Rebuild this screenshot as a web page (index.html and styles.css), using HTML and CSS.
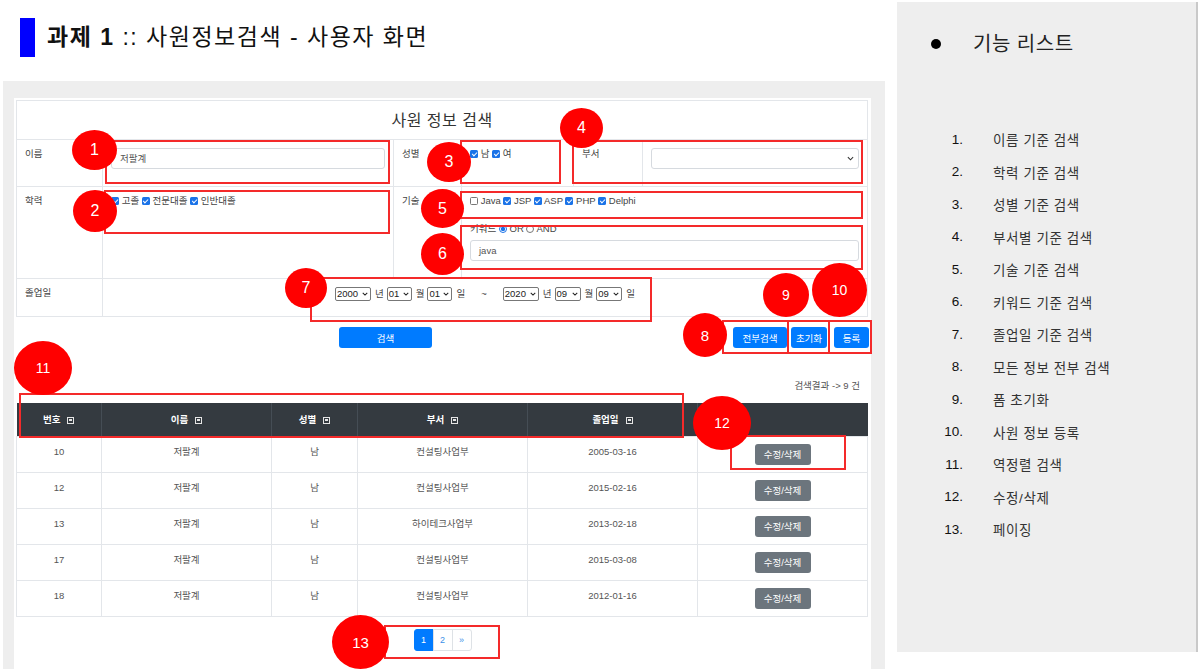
FILE: index.html
```html
<!DOCTYPE html>
<html lang="ko">
<head>
<meta charset="utf-8">
<title>과제 1 :: 사원정보검색 - 사용자 화면</title>
<link rel="stylesheet" href="styles.css">
</head>
<body>
<div class="page">
  <div class="main">
    <header class="title">
      <span class="bar"></span>
      <h1><b>과제 1</b> :: 사원정보검색 - 사용자 화면</h1>
    </header>
    <div class="panel">
      <div class="sheet">
        <table class="form">
          <colgroup>
            <col class="w86"><col class="w291"><col class="w68"><col class="w112"><col class="w69"><col class="w225">
          </colgroup>
          <tr class="r-title"><td colspan="6" class="form-title">사원 정보 검색</td></tr>
          <tr class="r1">
            <td>이름</td>
            <td><div class="input">저팔계</div></td>
            <td>성별</td>
            <td><span class="cb"></span> 남 <span class="cb"></span> 여</td>
            <td>부서</td>
            <td><div class="select"><svg class="chev" viewBox="0 0 8 5" width="7" height="5"><path d="M1 1l3 3 3-3" fill="none" stroke="#333" stroke-width="1.2"/></svg></div></td>
          </tr>
          <tr class="r2">
            <td>학력</td>
            <td><span class="cb"></span> 고졸 <span class="cb"></span> 전문대졸 <span class="cb"></span> 인반대졸</td>
            <td>기술</td>
            <td colspan="3">
              <div class="line"><span class="cb off"></span> Java <span class="cb"></span> JSP <span class="cb"></span> ASP <span class="cb"></span> PHP <span class="cb"></span> Delphi</div>
              <div class="kw">키워드 <span class="rd"></span> OR <span class="rd off"></span> AND</div>
              <div class="input">java</div>
            </td>
          </tr>
          <tr class="r3">
            <td>졸업일</td>
            <td colspan="5">
              <div class="dates"><span class="dsel w36">2000<svg class="chev" viewBox="0 0 8 5" width="6" height="4"><path d="M1 1l3 3 3-3" fill="none" stroke="#222" stroke-width="1.4"/></svg></span><span class="unit">년</span><span class="dsel w25">01<svg class="chev" viewBox="0 0 8 5" width="6" height="4"><path d="M1 1l3 3 3-3" fill="none" stroke="#222" stroke-width="1.4"/></svg></span><span class="unit">월</span><span class="dsel w25">01<svg class="chev" viewBox="0 0 8 5" width="6" height="4"><path d="M1 1l3 3 3-3" fill="none" stroke="#222" stroke-width="1.4"/></svg></span><span class="unit end">일</span><span class="tilde">~</span><span class="dsel w36">2020<svg class="chev" viewBox="0 0 8 5" width="6" height="4"><path d="M1 1l3 3 3-3" fill="none" stroke="#222" stroke-width="1.4"/></svg></span><span class="unit">년</span><span class="dsel w26">09<svg class="chev" viewBox="0 0 8 5" width="6" height="4"><path d="M1 1l3 3 3-3" fill="none" stroke="#222" stroke-width="1.4"/></svg></span><span class="unit">월</span><span class="dsel w26">09<svg class="chev" viewBox="0 0 8 5" width="6" height="4"><path d="M1 1l3 3 3-3" fill="none" stroke="#222" stroke-width="1.4"/></svg></span><span class="unit end">일</span></div>
            </td>
          </tr>
        </table>

        <div class="actions">
          <span class="btn btn-search">검색</span>
          <span class="btn btn-all">전부검색</span>
          <span class="btn btn-reset">초기화</span>
          <span class="btn btn-reg">등록</span>
        </div>

        <div class="count">검색결과 -&gt; 9 건</div>

        <table class="list">
          <colgroup>
            <col class="c85"><col class="c170"><col class="c86"><col class="c170"><col class="c170"><col class="c170">
          </colgroup>
          <thead>
            <tr>
              <th>번호<span class="sort"></span></th>
              <th>이름<span class="sort"></span></th>
              <th>성별<span class="sort"></span></th>
              <th>부서<span class="sort"></span></th>
              <th>졸업일<span class="sort"></span></th>
              <th></th>
            </tr>
          </thead>
          <tbody>
            <tr><td>10</td><td>저팔계</td><td>남</td><td>컨설팅사업부</td><td>2005-03-16</td><td><span class="btn-edit">수정/삭제</span></td></tr>
            <tr><td>12</td><td>저팔계</td><td>남</td><td>컨설팅사업부</td><td>2015-02-16</td><td><span class="btn-edit">수정/삭제</span></td></tr>
            <tr><td>13</td><td>저팔계</td><td>남</td><td>하이테크사업부</td><td>2013-02-18</td><td><span class="btn-edit">수정/삭제</span></td></tr>
            <tr><td>17</td><td>저팔계</td><td>남</td><td>컨설팅사업부</td><td>2015-03-08</td><td><span class="btn-edit">수정/삭제</span></td></tr>
            <tr><td>18</td><td>저팔계</td><td>남</td><td>컨설팅사업부</td><td>2012-01-16</td><td><span class="btn-edit">수정/삭제</span></td></tr>
          </tbody>
        </table>

        <nav class="pager">
          <span class="pg active">1</span><span class="pg">2</span><span class="pg last">»</span>
        </nav>
      </div>
    </div>
  </div>

  <aside class="side">
    <h2><span class="bullet"></span>기능 리스트</h2>
    <ol class="items">
      <li><span class="num">1.</span><span class="txt">이름 기준 검색</span></li>
      <li><span class="num">2.</span><span class="txt">학력 기준 검색</span></li>
      <li><span class="num">3.</span><span class="txt">성별 기준 검색</span></li>
      <li><span class="num">4.</span><span class="txt">부서별 기준 검색</span></li>
      <li><span class="num">5.</span><span class="txt">기술 기준 검색</span></li>
      <li><span class="num">6.</span><span class="txt">키워드 기준 검색</span></li>
      <li><span class="num">7.</span><span class="txt">졸업일 기준 검색</span></li>
      <li><span class="num">8.</span><span class="txt">모든 정보 전부 검색</span></li>
      <li><span class="num">9.</span><span class="txt">폼 초기화</span></li>
      <li><span class="num">10.</span><span class="txt">사원 정보 등록</span></li>
      <li><span class="num">11.</span><span class="txt">역정렬 검색</span></li>
      <li><span class="num">12.</span><span class="txt">수정/삭제</span></li>
      <li><span class="num">13.</span><span class="txt">페이징</span></li>
    </ol>
  </aside>

  <div class="notes">
    <div class="box b1"></div><div class="box b2"></div><div class="box b3"></div><div class="box b4"></div>
    <div class="box b5"></div><div class="box b6"></div><div class="box b7"></div><div class="box b8"></div>
    <div class="box b9"></div><div class="box b10"></div><div class="box b11"></div><div class="box b12"></div>
    <div class="box b13"></div>
    <div class="dot d1">1</div><div class="dot d2">2</div><div class="dot d3">3</div><div class="dot d4">4</div>
    <div class="dot d5">5</div><div class="dot d6">6</div><div class="dot d7">7</div><div class="dot d8">8</div>
    <div class="dot d9">9</div><div class="dot d10">10</div><div class="dot d11">11</div><div class="dot d12">12</div>
    <div class="dot d13">13</div>
  </div>
</div>
</body>
</html>
```

FILE: styles.css
```css
* { box-sizing: border-box; }
html, body { margin: 0; padding: 0; }
body {
  width: 1198px;
  height: 669px;
  overflow: hidden;
  background: #fff;
  font-family: "Liberation Sans", "Noto Sans CJK KR", sans-serif;
}
.page { position: relative; display: flex; width: 1198px; height: 669px; }

/* ---------- left area ---------- */
.main { width: 886px; display: flex; flex-direction: column; }
.title { height: 81px; display: flex; align-items: flex-start; padding: 18px 0 0 20px; }
.bar { width: 15px; height: 39px; background: #0000ff; flex: none; }
.title h1 {
  margin: 0 0 0 12px;
  font-size: 23px;
  font-weight: normal;
  line-height: 38px;
  color: #111;
  letter-spacing: 1.5px;
}
.title h1 b { font-weight: bold; }

.panel { margin-left: 3px; width: 882px; flex: 1; background: #eeeeee; padding: 17px 14px 0 11px; }
.sheet {
  background: #fff;
  height: 100%;
  padding: 2px 2px 0 2px;
  font-family: "Liberation Sans", "Noto Sans CJK KR", sans-serif;
  font-size: 9.5px;
  color: #444;
}

/* form table */
.form { width: 851px; border-collapse: collapse; table-layout: fixed; }
.w86 { width: 86px; } .w291 { width: 291px; } .w68 { width: 68px; }
.w112 { width: 112px; } .w69 { width: 69px; } .w225 { width: 225px; }
.form td {
  border: 1px solid #e3e6ea;
  padding: 7px 8px 0 8px;
  vertical-align: top;
  line-height: 13px;
}
.r-title { height: 39px; }
.r1 { height: 47px; }
.r2 { height: 92px; }
.r3 { height: 38px; }
.form .form-title {
  text-align: center;
  vertical-align: middle;
  padding: 0;
  font-size: 16px;
  color: #333;
  letter-spacing: 0.5px;
}
.input {
  height: 21px;
  border: 1px solid #d6dadf;
  border-radius: 3px;
  padding: 0 8px;
  line-height: 19px;
  color: #555;
  margin-top: 1px;
}
.select {
  height: 21px;
  border: 1px solid #d6dadf;
  border-radius: 3px;
  display: flex;
  justify-content: flex-end;
  align-items: center;
  padding-right: 4px;
  margin-top: 1px;
}
.line { line-height: 13px; }
.kw { margin-top: 15px; line-height: 13px; }
.kw + .input { margin-top: 5px; }

.cb {
  display: inline-block;
  position: relative;
  width: 8px;
  height: 8px;
  border-radius: 1.5px;
  background: #1a73e8;
  vertical-align: -1px;
}
.cb::after {
  content: "";
  position: absolute;
  left: 2.6px;
  top: 0.6px;
  width: 2px;
  height: 4.4px;
  border: solid #fff;
  border-width: 0 1.2px 1.2px 0;
  transform: rotate(45deg);
}
.cb.off { background: #fff; border: 1px solid #777; }
.cb.off::after { display: none; }
.rd {
  display: inline-block;
  width: 8px;
  height: 8px;
  border-radius: 50%;
  border: 1px solid #1a73e8;
  background: radial-gradient(circle, #1a73e8 0 2px, #fff 2.3px);
  vertical-align: -1px;
}
.rd.off { border-color: #777; background: #fff; }

.dates { display: flex; justify-content: center; align-items: center; height: 16px; }
.dsel {
  display: inline-flex;
  align-items: center;
  justify-content: space-between;
  height: 14px;
  border: 1px solid #777;
  border-radius: 2px;
  padding: 0 2px 0 1px;
  line-height: 12px;
  color: #222;
}
.w36 { width: 36px; } .w25 { width: 25px; } .w26 { width: 26px; }
.unit { margin: 0 3px 0 4px; line-height: 16px; }
.unit.end { margin-right: 0; }
.tilde { margin: 0 16px; line-height: 16px; }

/* buttons */
.actions { display: flex; height: 21px; margin-top: 10px; }
.btn {
  display: flex;
  align-items: center;
  justify-content: center;
  height: 21px;
  background: #007bff;
  color: #fff;
  border-radius: 3px;
  font-size: 9.5px;
}
.btn-search { margin-left: 323px; width: 93px; }
.btn-all { margin-left: auto; width: 54px; }
.btn-reset { margin-left: 4px; width: 36px; }
.btn-reg { margin-left: 7px; width: 35px; }

.count { margin-top: 32px; text-align: right; padding-right: 9px; line-height: 12px; height: 12px; color: #555; font-size: 9.5px; }

/* list table */
.list { margin-top: 11px; width: 851px; border-collapse: collapse; table-layout: fixed; }
.c85 { width: 85px; } .c170 { width: 170px; } .c86 { width: 86px; }
.list th {
  background: #343a40;
  color: #fff;
  height: 33px;
  font-size: 9.5px;
  font-weight: bold;
  border-left: 1px solid #454d55;
  vertical-align: middle;
  padding: 0;
}
.list th:first-child { border-left: 0; }
.sort {
  display: inline-block;
  position: relative;
  width: 7px;
  height: 7px;
  border: 1px solid #e5e5e5;
  margin-left: 7px;
  vertical-align: -1px;
}
.sort::after {
  content: "";
  position: absolute;
  left: 1px;
  top: 1px;
  width: 3px;
  height: 2px;
  background: #e5e5e5;
}
.list td {
  border: 1px solid #e3e6ea;
  height: 36px;
  text-align: center;
  vertical-align: top;
  padding: 7px 0 0 0;
  line-height: 15px;
  color: #555;
}
.btn-edit {
  display: inline-flex;
  align-items: center;
  justify-content: center;
  width: 56px;
  height: 21px;
  background: #6c757d;
  color: #fff;
  border-radius: 3px;
}

.pager { display: flex; justify-content: center; margin-top: 12px; }
.pg {
  width: 20px;
  height: 22px;
  border: 1px solid #dee2e6;
  margin-left: -1px;
  display: flex;
  align-items: center;
  justify-content: center;
  color: #3b8fe8;
  font-size: 9px;
}
.pg.active { background: #007bff; border-color: #007bff; color: #fff; border-radius: 3px 0 0 3px; margin-left: 0; }
.pg.last { border-radius: 0 3px 3px 0; }

/* ---------- right panel ---------- */
.side {
  margin: 2px 0 0 11px;
  width: 301px;
  height: 650px;
  background: #eeeeee;
  border-right: 2px solid #c9c9c9;
}
.side h2 {
  margin: 0;
  padding: 30px 0 0 34px;
  display: flex;
  align-items: center;
  height: 54px;
  font-size: 20px;
  font-weight: normal;
  line-height: 24px;
  color: #222;
  letter-spacing: 0.5px;
}
.bullet { width: 10px; height: 10px; border-radius: 50%; background: #000; margin-right: 32px; }
.items { list-style: none; margin: 67px 0 0 0; padding: 0; font-size: 13.5px; }
.items li { display: flex; align-items: center; height: 32.5px; }
.num { width: 66px; text-align: right; color: #111; }
.txt { margin-left: 30px; color: #333; letter-spacing: 0.6px; }

/* ---------- annotations ---------- */
.notes { position: absolute; left: 0; top: 0; width: 1198px; height: 669px; pointer-events: none; }
.box { position: absolute; border: 2px solid #f42a2a; }
.b1 { left: 105px; top: 140px; width: 285px; height: 44px; }
.b2 { left: 104px; top: 190px; width: 286px; height: 44px; }
.b3 { left: 460px; top: 140px; width: 101px; height: 44px; }
.b4 { left: 572px; top: 140px; width: 291px; height: 44px; }
.b5 { left: 460px; top: 191px; width: 403px; height: 28px; }
.b6 { left: 460px; top: 225px; width: 403px; height: 45px; }
.b7 { left: 310px; top: 277px; width: 342px; height: 45px; }
.b8 { left: 722px; top: 320px; width: 67px; height: 34px; }
.b9 { left: 787px; top: 320px; width: 43px; height: 34px; }
.b10 { left: 828px; top: 320px; width: 44px; height: 34px; }
.b11 { left: 19px; top: 393px; width: 665px; height: 45px; }
.b12 { left: 730px; top: 435px; width: 116px; height: 35px; }
.b13 { left: 384px; top: 625px; width: 116px; height: 34px; }

.dot {
  position: absolute;
  border-radius: 50%;
  background: #ff0000;
  color: #fff;
  display: flex;
  align-items: center;
  justify-content: center;
  font-family: "Liberation Sans", sans-serif;
  font-size: 16px;
}
.d1 { left: 72px; top: 130px; width: 45px; height: 40px; }
.d2 { left: 73px; top: 190px; width: 44px; height: 42px; }
.d3 { left: 427px; top: 142px; width: 44px; height: 40px; }
.d4 { left: 560px; top: 108px; width: 43px; height: 40px; }
.d5 { left: 421px; top: 189px; width: 43px; height: 39px; }
.d6 { left: 421px; top: 233px; width: 43px; height: 42px; }
.d7 { left: 285px; top: 268px; width: 42px; height: 40px; }
.d8 { left: 683px; top: 313px; width: 44px; height: 44px; font-size: 15px; }
.d9 { left: 763px; top: 273px; width: 46px; height: 44px; font-size: 14px; }
.d10 { left: 812px; top: 263px; width: 55px; height: 54px; font-size: 14px; }
.d11 { left: 14px; top: 341px; width: 58px; height: 54px; font-size: 14px; }
.d12 { left: 693px; top: 396px; width: 58px; height: 54px; font-size: 14px; }
.d13 { left: 332px; top: 615px; width: 57px; height: 54px; font-size: 15px; }
```
